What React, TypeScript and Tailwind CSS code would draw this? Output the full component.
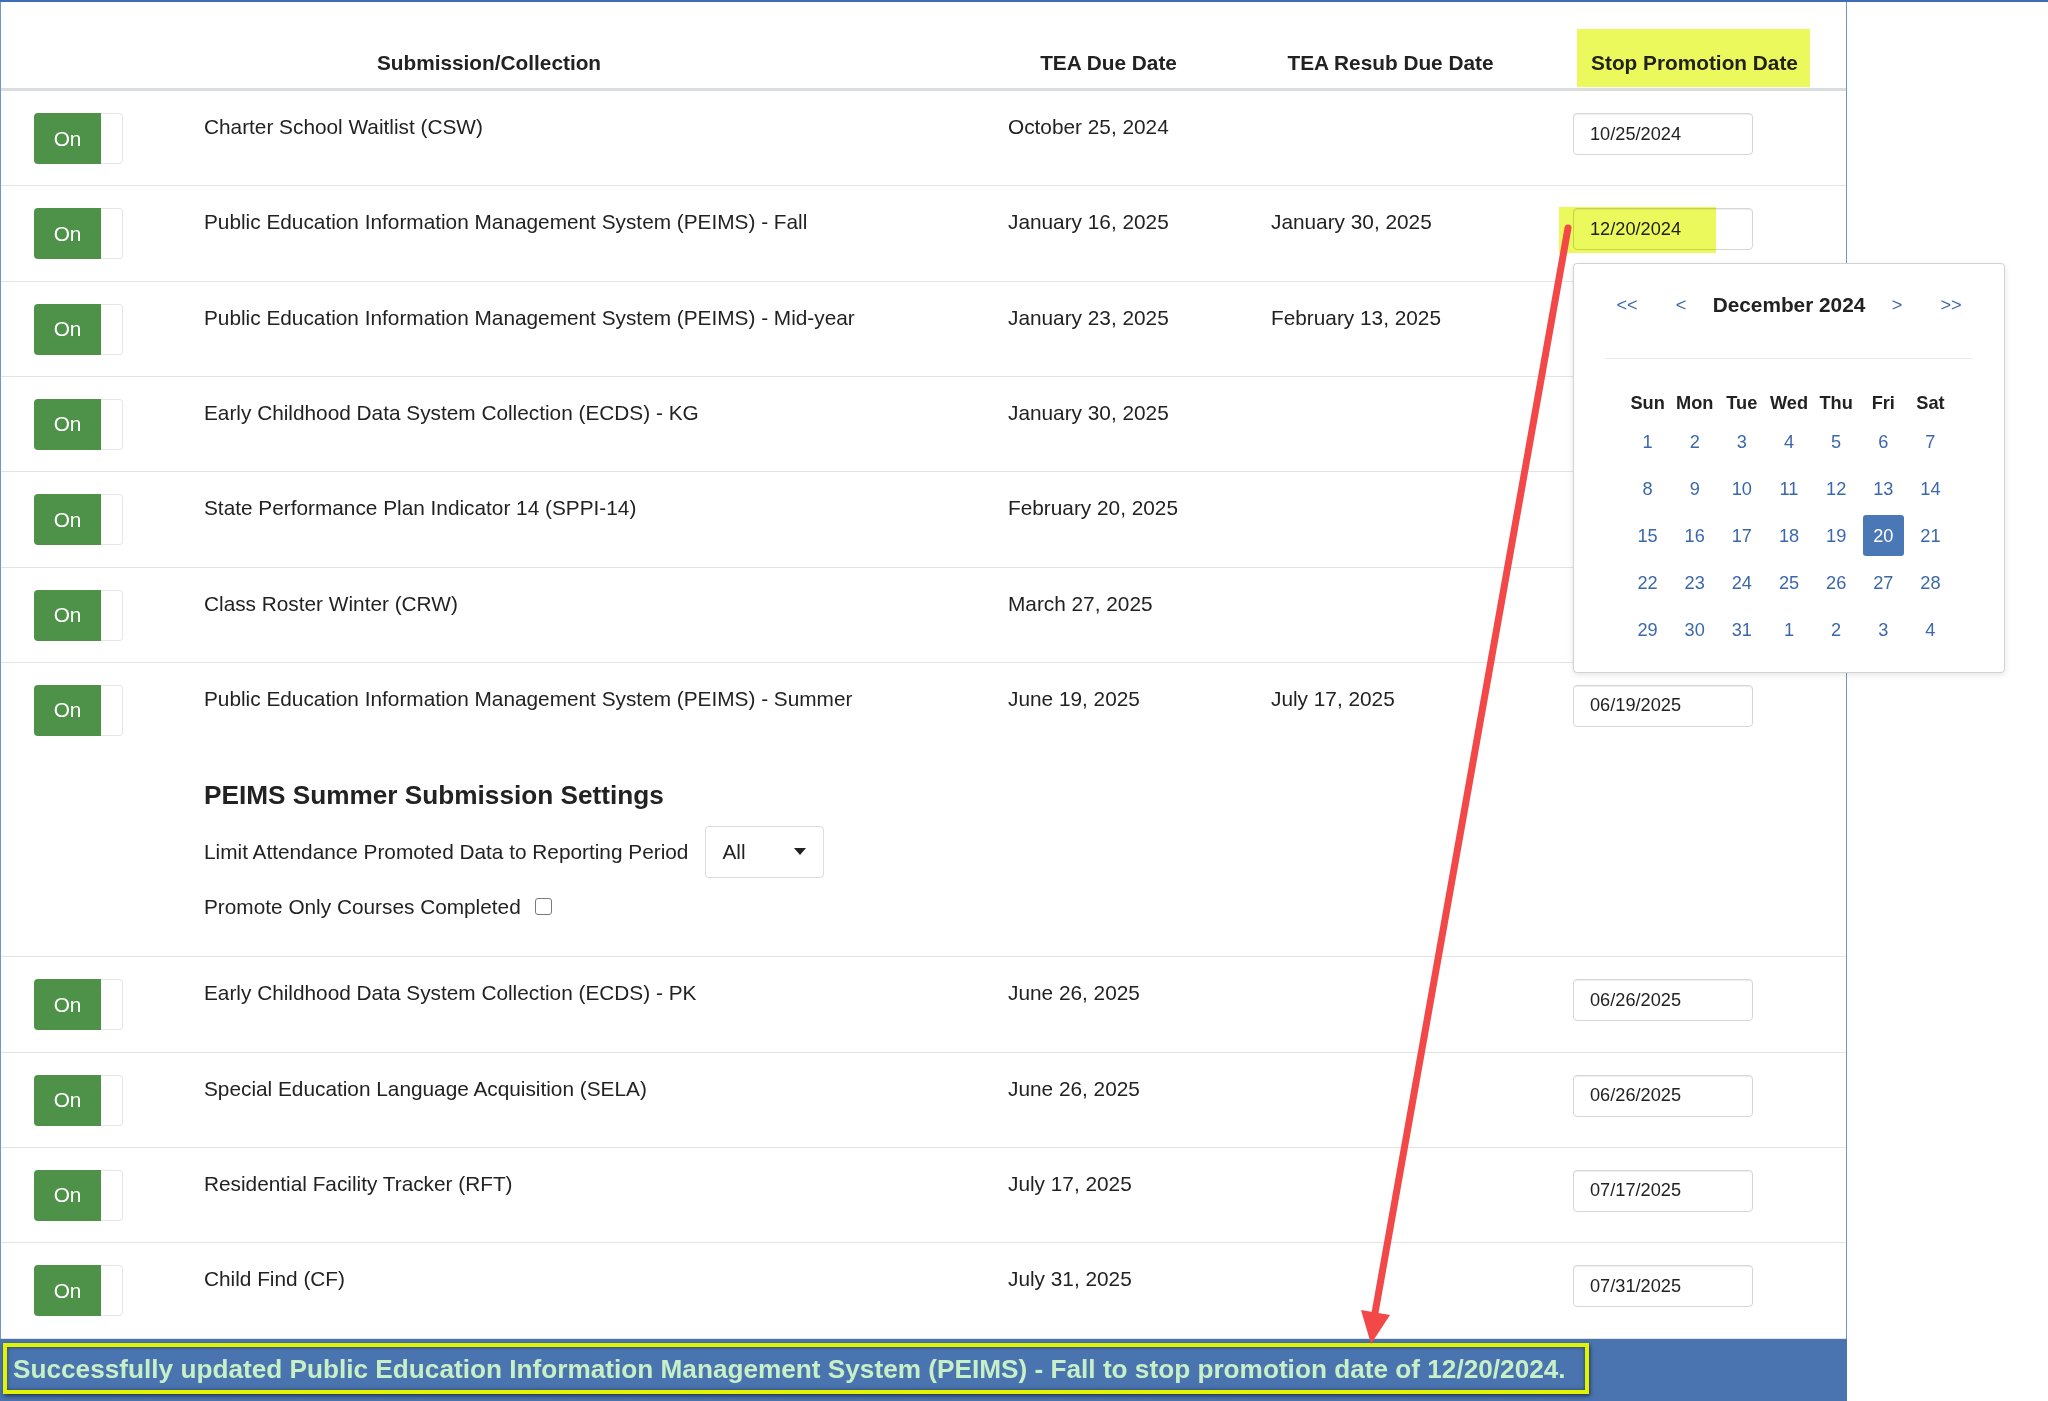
import { ReactNode, useState } from 'react'

type Submission = {
  name: string
  due: string
  resub?: string
  stop: string
}

const submissions: Submission[] = [
  { name: 'Charter School Waitlist (CSW)', due: 'October 25, 2024', stop: '10/25/2024' },
  {
    name: 'Public Education Information Management System (PEIMS) - Fall',
    due: 'January 16, 2025',
    resub: 'January 30, 2025',
    stop: '12/20/2024',
  },
  {
    name: 'Public Education Information Management System (PEIMS) - Mid-year',
    due: 'January 23, 2025',
    resub: 'February 13, 2025',
    stop: '01/23/2025',
  },
  { name: 'Early Childhood Data System Collection (ECDS) - KG', due: 'January 30, 2025', stop: '01/30/2025' },
  { name: 'State Performance Plan Indicator 14 (SPPI-14)', due: 'February 20, 2025', stop: '02/20/2025' },
  { name: 'Class Roster Winter (CRW)', due: 'March 27, 2025', stop: '03/27/2025' },
  {
    name: 'Public Education Information Management System (PEIMS) - Summer',
    due: 'June 19, 2025',
    resub: 'July 17, 2025',
    stop: '06/19/2025',
  },
  { name: 'Early Childhood Data System Collection (ECDS) - PK', due: 'June 26, 2025', stop: '06/26/2025' },
  { name: 'Special Education Language Acquisition (SELA)', due: 'June 26, 2025', stop: '06/26/2025' },
  { name: 'Residential Facility Tracker (RFT)', due: 'July 17, 2025', stop: '07/17/2025' },
  { name: 'Child Find (CF)', due: 'July 31, 2025', stop: '07/31/2025' },
]

const weekDays = ['Sun', 'Mon', 'Tue', 'Wed', 'Thu', 'Fri', 'Sat']

// December 2024 starts on a Sunday, trailing days roll into January
const calendarDays = [
  ...Array.from({ length: 31 }, (_, i) => ({ day: i + 1, current: true })),
  ...[1, 2, 3, 4].map((d) => ({ day: d, current: false })),
]

function Toggle() {
  return (
    <div className="flex h-[51px] w-[89px]">
      <div className="flex w-[67px] items-center justify-center rounded-l-[4px] bg-[#4e9149] text-[20.8px] text-white">
        On
      </div>
      <div className="flex-1 rounded-r-[4px] border border-l-0 border-[#e6e6e6] bg-white" />
    </div>
  )
}

function DatePicker({ selected }: { selected: number }) {
  const weeks = [0, 1, 2, 3, 4].map((w) => calendarDays.slice(w * 7, w * 7 + 7))
  return (
    <div className="absolute left-0 top-[55px] z-10 w-[432px] rounded-[4px] border border-[#d2d2d2] bg-white px-[26px] pb-[19px] pt-[20px] shadow-[0_2px_6px_rgba(0,0,0,0.1)]">
      <div className="flex h-[42px] items-center text-[18.2px] text-[#3b68ad]">
        <button className="w-[54px] text-center">&lt;&lt;</button>
        <button className="w-[54px] text-center">&lt;</button>
        <div className="flex-1 text-center text-[20.8px] font-bold text-[#222]">December 2024</div>
        <button className="w-[54px] text-center">&gt;</button>
        <button className="w-[54px] text-center">&gt;&gt;</button>
      </div>
      <div className="mx-[5px] mt-[32px] h-px bg-[#ececec]" />
      <div className="mx-[24px] mt-[29px] grid h-[30px] grid-cols-7 items-center text-center text-[18.2px] font-bold text-[#222]">
        {weekDays.map((d) => (
          <div key={d}>{d}</div>
        ))}
      </div>
      <div className="mx-[24px]">
        {weeks.map((week, i) => (
          <div key={i} className="grid h-[47px] grid-cols-7 text-[18.2px] text-[#3b68ad]">
            {week.map((d) => (
              <div key={`${d.current}-${d.day}`} className="flex items-center justify-center">
                {d.current && d.day === selected ? (
                  <span className="flex h-[41px] w-[41px] items-center justify-center rounded-[3px] bg-[#4a78b6] text-white">
                    {d.day}
                  </span>
                ) : (
                  <span>{d.day}</span>
                )}
              </div>
            ))}
          </div>
        ))}
      </div>
    </div>
  )
}

function StopDateInput({ value, active }: { value: string; active?: boolean }) {
  return (
    <div className="relative w-[180px]">
      <input
        readOnly
        value={value}
        className="h-[42px] w-[180px] rounded-[4px] border border-[#d6d6d6] bg-white pl-[16px] text-[18.2px] text-[#222] shadow-[inset_0_1px_1px_rgba(0,0,0,0.07)] outline-none"
      />
      {active && (
        <>
          <span className="absolute -left-[14px] -top-[1px] h-[46px] w-[157px] bg-[#ecf95c] mix-blend-multiply" />
          <DatePicker selected={20} />
        </>
      )}
    </div>
  )
}

function SubmissionRow({
  item,
  active,
  tall,
  children,
}: {
  item: Submission
  active?: boolean
  tall?: boolean
  children?: ReactNode
}) {
  return (
    <div
      className={
        tall
          ? 'grid h-[294.33px] grid-cols-[171px_805px_263px_301px_305px] items-start border-b border-[#e3e3e3] pt-[21px]'
          : 'grid h-[95.33px] grid-cols-[171px_805px_263px_301px_305px] items-start border-b border-[#e3e3e3] pt-[21px]'
      }
    >
      <div className="pl-[33px] pt-px">
        <Toggle />
      </div>
      <div className="pl-[32px]">
        <div>{item.name}</div>
        {children}
      </div>
      <div className="pl-[31px]">{item.due}</div>
      <div className="pl-[31px]">{item.resub}</div>
      <div className="pl-[32px] pt-px">
        <StopDateInput value={item.stop} active={active} />
      </div>
    </div>
  )
}

function SummerSettings() {
  const [limit] = useState('All')
  return (
    <>
      <div className="mt-[67px] text-[26.2px] font-bold leading-[1.1] text-[#222]">PEIMS Summer Submission Settings</div>
      <div className="mt-[16px] flex items-center">
        <span>Limit Attendance Promoted Data to Reporting Period</span>
        <div className="ml-[17px] flex h-[52px] w-[119px] items-center justify-between rounded-[4px] border border-[#dcdcdc] pl-[16px] pr-[17px]">
          <span>{limit}</span>
          <svg width="12" height="7" viewBox="0 0 12 7">
            <path d="M0 0h12L6 7z" fill="#222" />
          </svg>
        </div>
      </div>
      <div className="mt-[14px] flex items-center">
        <span>Promote Only Courses Completed</span>
        <span className="ml-[14px] h-[17px] w-[17px] rounded-[3px] border border-[#7a7a7a] bg-white" />
      </div>
    </>
  )
}

export default function App() {
  return (
    <div className="relative h-[1401px] w-[2048px] overflow-hidden border-t-2 border-[#3e6db5] bg-white font-['Liberation_Sans',Arial,sans-serif] text-[20.8px] leading-[30px] text-[#222]">
      <div className="w-[1847px] border-x border-[#6e96cf]">
        {/* column headings */}
        <div className="grid h-[89px] grid-cols-[171px_805px_263px_301px_305px] items-end border-b-[3px] border-[#dadde0] pb-[10px] font-bold">
          <div className="col-span-2 text-center">Submission/Collection</div>
          <div className="text-center">TEA Due Date</div>
          <div className="text-center">TEA Resub Due Date</div>
          <div className="flex justify-center">
            <span className="-mb-[9px] bg-[#ecf95c] pb-[9px] pl-[14px] pr-[12px] pt-[19px]">Stop Promotion Date</span>
          </div>
        </div>

        {submissions.map((item, i) =>
          i === 6 ? (
            <SubmissionRow key={item.name} item={item} tall>
              <SummerSettings />
            </SubmissionRow>
          ) : (
            <SubmissionRow key={item.name} item={item} active={i === 1} />
          )
        )}
      </div>

      {/* status bar */}
      <div className="h-[70px] w-[1847px] bg-[#4a74b0] pl-[3px] pt-[4px]">
        <div className="inline-block border-[4px] border-[#e2f400] pb-[4px] pl-[6px] pr-[19px] pt-[9px] shadow-[1px_2px_4px_rgba(0,0,0,0.55),inset_0_0_4px_rgba(0,0,0,0.45)]">
          <span className="whitespace-nowrap text-[26.2px] font-bold leading-none text-[#c8f0c6]">
            Successfully updated Public Education Information Management System (PEIMS) - Fall to stop promotion date of
            12/20/2024.
          </span>
        </div>
      </div>

      {/* callout arrow */}
      <svg className="pointer-events-none absolute left-0 top-0 z-20" width="2048" height="1401">
        <line x1="1568" y1="226" x2="1375" y2="1311" stroke="#f24848" strokeWidth="7" strokeLinecap="round" />
        <polygon points="1371,1342 1390,1313 1361,1308" fill="#f24848" />
      </svg>
    </div>
  )
}
